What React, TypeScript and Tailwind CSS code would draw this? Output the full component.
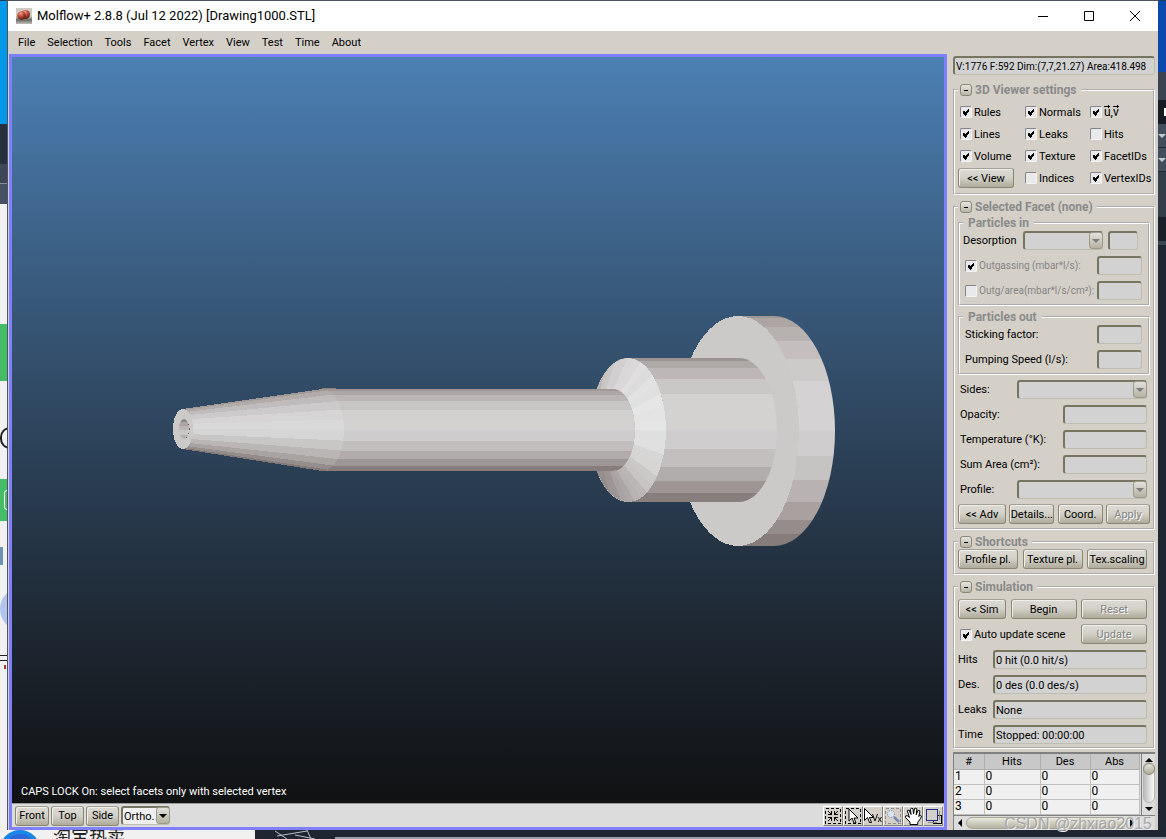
import React from "react";

/* ---------- geometry helpers for the 3D part ---------- */

type Ell = { cx: number; cy: number; rx: number; ry: number };

const FLANGE_FRONT: Ell = { cx: 738, cy: 431, rx: 61, ry: 115 };
const FLANGE_BACK: Ell = { cx: 774, cy: 431, rx: 61, ry: 115 };
const HUB_FRONT: Ell = { cx: 628, cy: 430, rx: 38, ry: 72 };
const HUB_BACK: Ell = { cx: 739, cy: 430, rx: 38, ry: 72 };
const SHAFT_END: Ell = { cx: 613, cy: 430, rx: 22, ry: 41 };
const TAPER_END: Ell = { cx: 322, cy: 430, rx: 22, ry: 41 };
const TIP: Ell = { cx: 183, cy: 429, rx: 10, ry: 20 };

function at(e: Ell, deg: number): [number, number] {
  const a = (deg * Math.PI) / 180;
  return [e.cx + e.rx * Math.cos(a), e.cy + e.ry * Math.sin(a)];
}

function poly(points: [number, number][]) {
  return points.map(([x, y]) => `${x.toFixed(1)},${y.toFixed(1)}`).join(" ");
}

function sweep(a: Ell, b: Ell) {
  return `M${a.cx} ${a.cy - a.ry}H${b.cx}A${b.rx} ${b.ry} 0 0 1 ${b.cx} ${b.cy + b.ry}H${a.cx}A${a.rx} ${a.ry} 0 0 1 ${a.cx} ${a.cy - a.ry}Z`;
}

type Band = [number, string];

function Bands({ x, w, end, bands, clip }: { x: number; w: number; end: number; bands: Band[]; clip: string }) {
  return (
    <g clipPath={`url(#${clip})`}>
      {bands.map(([y, c], i) => {
        const next = i + 1 < bands.length ? bands[i + 1][0] : end;
        return <rect key={y} x={x} y={y} width={w} height={next - y} fill={c} />;
      })}
    </g>
  );
}

const FLANGE_BANDS: Band[] = [
  [315, "#a09897"], [318, "#aca5a4"], [327, "#b7b1b0"], [341, "#c4bfbe"], [359, "#cccbc9"], [381, "#d4d2d3"],
  [430, "#cfcdce"], [456, "#c5c4c2"], [480, "#b8b3b2"], [502, "#a8a1a0"], [520, "#958d8c"], [534, "#867c7b"],
];
const HUB_BANDS: Band[] = [
  [357, "#9c9493"], [361, "#aea8a7"], [368, "#bdb8b7"], [379, "#c9c8c6"], [394, "#d3d2d1"], [430, "#cfcdce"],
  [449, "#c3bfbe"], [467, "#b1adac"], [481, "#9d9695"], [493, "#877e7d"],
];
const SHAFT_BANDS: Band[] = [
  [388, "#a09897"], [391, "#ada7a6"], [395, "#bbb6b5"], [401, "#c8c6c4"], [410, "#d1d0cf"], [419, "#d3d2d1"], [430, "#cecccd"],
  [441, "#c2bebd"], [451, "#b1acab"], [459, "#9d9695"], [466, "#877d7c"],
];
const TAPER_COLORS = [
  "#a19a99", "#b1abaa", "#c0bcbb", "#cccaca", "#d6d4d5", "#dad9da",
  "#d6d5d5", "#c9c7c6", "#bab6b5", "#a8a2a1", "#958d8c", "#827877",
];
const HOLE_BANDS: Band[] = [
  [418, "#8e8584"], [422, "#a9a3a2"], [426, "#bab6b5"], [430, "#c9c7c5"], [435, "#b5b0af"],
];

const CHAMFER_COLORS: Band[] = [
  [-180, "#b5b0af"], [-160, "#a9a2a1"], [-135, "#bdb8b7"], [-110, "#cecccb"], [-90, "#d5d3d4"], [-75, "#dcdadb"],
  [-45, "#e1e0e1"], [-15, "#e6e6e6"], [15, "#dedede"], [38, "#d2d1d0"], [60, "#c1bdbc"], [85, "#aea9a8"],
  [110, "#9b9493"], [135, "#948c8b"], [181, "#b5b0af"],
];

function chamferColor(deg: number, odd: boolean) {
  let i = 0;
  while (i < CHAMFER_COLORS.length - 2 && CHAMFER_COLORS[i + 1][0] <= deg) i++;
  const [a0, c0] = CHAMFER_COLORS[i];
  const [a1, c1] = CHAMFER_COLORS[i + 1];
  const t = (deg - a0) / (a1 - a0);
  const ch = [1, 3, 5].map((k) => {
    const p = parseInt(c0.slice(k, k + 2), 16);
    const q = parseInt(c1.slice(k, k + 2), 16);
    return Math.round(p + (q - p) * t + (odd ? 2 : -2));
  });
  return `rgb(${ch.join(",")})`;
}

function Model() {
  const steps = Array.from({ length: 36 }, (_, i) => -180 + i * 10);
  return (
    <svg viewBox="12 57 932 746" className="absolute inset-0 h-full w-full" shapeRendering="crispEdges" role="img" aria-label="Drawing1000.STL">
      <defs>
        <clipPath id="flange"><path d={sweep(FLANGE_FRONT, FLANGE_BACK)} /></clipPath>
        <clipPath id="hub"><path d={sweep(HUB_FRONT, HUB_BACK)} /></clipPath>
        <clipPath id="shaft">
          <path d={`M${TAPER_END.cx} 389H${SHAFT_END.cx}A22 41 0 0 1 ${SHAFT_END.cx} 471H${TAPER_END.cx}Z`} />
        </clipPath>
        <clipPath id="hole"><ellipse cx="184" cy="429" rx="5" ry="10" /></clipPath>
      </defs>
      <Bands x={738} w={100} end={547} bands={FLANGE_BANDS} clip="flange" />
      <ellipse {...FLANGE_FRONT} fill="#cbcac8" />
      <Bands x={590} w={190} end={504} bands={HUB_BANDS} clip="hub" />
      <ellipse {...HUB_FRONT} fill="#bcb8b7" />
      {steps.map((d, i) => (
        <polygon
          key={d}
          points={poly([at(HUB_FRONT, d), at(HUB_FRONT, d + 10.5), at(SHAFT_END, d + 10.5), at(SHAFT_END, d)])}
          fill={chamferColor(d + 5, i % 2 === 1)}
        />
      ))}
      <Bands x={320} w={318} end={472} bands={SHAFT_BANDS} clip="shaft" />
      <rect x="322" y="388" width="14" height="1" fill="#8a8180" />
      {TAPER_COLORS.map((c, i) => {
        const a = -90 + i * 15;
        return (
          <polygon
            key={a}
            points={poly([at(TIP, a), at(TAPER_END, a), at(TAPER_END, a + 7.5), at(TAPER_END, a + 15), at(TIP, a + 15), [TIP.cx, TIP.cy]])}
            fill={c}
          />
        );
      })}
      <ellipse {...TIP} fill="#cbcac8" />
      <Bands x={178} w={12} end={440} bands={HOLE_BANDS} clip="hole" />
      <path d="M188 424h1v1h-1zM189 428h1v2h-1zM188 433h1v1h-1zM186 437h1v1h-1z" fill="#6d6362" />
    </svg>
  );
}

/* ---------- widgets ---------- */

const SUNKEN =
  "h-[19px] min-w-0 rounded-[3px] border border-t-2 border-l-2 border-t-[#77755f] border-l-[#77755f] border-r-[#bdbdb0] border-b-[#bdbdb0] bg-[#d2d2d2] px-px leading-[15px] text-black outline-none";
const RAISED =
  "h-[20px] rounded-[3px] border border-[#8a8873] border-t-[#a3a193] bg-linear-to-b from-[#dcdad5] via-[#d2d0c6] to-[#aeab9b] text-[11px] leading-[17px] whitespace-nowrap text-black shadow-[inset_1px_1px_0_#efeeea]";

function Btn({ children, className = "", disabled = false }: { children: React.ReactNode; className?: string; disabled?: boolean }) {
  return (
    <button type="button" disabled={disabled} className={`${RAISED} disabled:text-[#848484] disabled:[text-shadow:1px_1px_0_#fff] ${className}`}>
      {children}
    </button>
  );
}

function Check({ label, checked = false, disabled = false, aria }: { label: React.ReactNode; checked?: boolean; disabled?: boolean; aria?: string }) {
  return (
    <label className={`flex h-full items-center gap-[2px] whitespace-nowrap ${disabled ? "text-[10px] text-[#848484]" : ""}`}>
      <span className="grid h-3 w-3 shrink-0 place-items-center">
        <input
          type="checkbox"
          defaultChecked={checked}
          disabled={disabled}
          aria-label={aria}
          className="peer col-start-1 row-start-1 h-3 w-3 appearance-none rounded-[2px] border border-[#f4f4f4] border-t-[#84848c] border-l-[#84848c] bg-[#e9e9ec]"
        />
        <svg viewBox="0 0 12 12" className="pointer-events-none invisible col-start-1 row-start-1 h-3 w-3 peer-checked:visible" shapeRendering="crispEdges">
          <path d="M3 5v2l2 3h1l3-5V3H8L6 6H5L4 5z" fill="#000" />
        </svg>
      </span>
      {label}
    </label>
  );
}

function Drop({ label, className, children, light = false }: { label: string; className: string; children?: React.ReactNode; light?: boolean }) {
  return (
    <span className={`relative flex ${className}`}>
      <select aria-label={label} className={`${SUNKEN} w-full appearance-none text-[11px] ${light ? "bg-[#f0f0f0]" : ""}`}>
        {children}
      </select>
      <span className="pointer-events-none absolute top-px right-0 grid h-[17px] w-[14px] place-items-center rounded-[3px] border border-[#9b9987] bg-linear-to-b from-[#e2e1dc] to-[#b5b2a2]">
        <svg viewBox="0 0 8 4" className="h-1 w-2"><path d="M0 0h8L4 4z" fill={light ? "#000" : "#7d7d7d"} /></svg>
      </span>
    </span>
  );
}

function Group({ title, children, collapsible = false, className = "" }: { title: string; children: React.ReactNode; collapsible?: boolean; className?: string }) {
  return (
    <fieldset className={`min-w-0 border-2 border-white [border-style:groove] ${className}`}>
      <legend className={`flex h-[14px] items-center gap-[3px] text-[12px] leading-[14px] font-bold whitespace-nowrap text-[#8a8a8a] ${collapsible ? "pr-1 pl-[2px]" : "px-[5px]"}`}>
        {collapsible && (
          <button type="button" aria-label={`Collapse ${title}`} className="grid h-3 w-3 place-items-center rounded-[3px] border border-[#8a8873] bg-linear-to-b from-[#e6e5e0] to-[#b8b5a6]">
            <span className="h-px w-1 bg-black" />
          </button>
        )}
        {title}
      </legend>
      {children}
    </fieldset>
  );
}

function Field({ label, id, width, value }: { label: React.ReactNode; id: string; width: string; value?: string }) {
  return (
    <div className="flex h-[21px] items-center justify-between">
      <label htmlFor={id} className="whitespace-nowrap">{label}</label>
      <input id={id} readOnly defaultValue={value} className={`${SUNKEN} text-[11px] ${width}`} />
    </div>
  );
}

const VIEW_CHECKS: { label: string; checked: boolean }[][] = [
  [{ label: "Rules", checked: true }, { label: "Normals", checked: true }, { label: "uv", checked: true }],
  [{ label: "Lines", checked: true }, { label: "Leaks", checked: true }, { label: "Hits", checked: false }],
  [{ label: "Volume", checked: true }, { label: "Texture", checked: true }, { label: "FacetIDs", checked: true }],
  [{ label: "", checked: false }, { label: "Indices", checked: false }, { label: "VertexIDs", checked: true }],
];

function Vectors() {
  return (
    <span className="relative text-[12px]">
      u,v
      <svg viewBox="0 0 18 5" className="absolute -top-[2px] left-0 h-[5px] w-[18px]" fill="#000" shapeRendering="crispEdges">
        <path d="M0 2h4V1h1v1h1v1H5v1H4V3H0zM9 2h4V1h1v1h1v1h-1v1h-1V3H9z" />
      </svg>
    </span>
  );
}

function Sidebar() {
  return (
    <aside className="flex w-[202px] shrink-0 flex-col pt-[2px] text-[11px] leading-[13px]">
      <input readOnly aria-label="Geometry summary" defaultValue="V:1776 F:592 Dim:(7,7,21.27) Area:418.498" className={`${SUNKEN} w-full shrink-0 text-[10px]`} />

      <Group title="3D Viewer settings" collapsible className="mt-2 px-[3px] pb-1">
        <div className="-mr-[3px] grid grid-cols-3 pt-1">
          {VIEW_CHECKS.flat().map((c, i) => (
            <div key={i} className="flex h-[22px] items-center pl-[2px]">
              {c.label === "" ? (
                <Btn className="-ml-[2px] w-[56px]">&lt;&lt; View</Btn>
              ) : (
                <Check label={c.label === "uv" ? <Vectors /> : c.label} checked={c.checked} aria={c.label === "uv" ? "u, v vectors" : undefined} />
              )}
            </div>
          ))}
        </div>
      </Group>

      <Group title="Selected Facet (none)" collapsible className="mt-[5px] px-[3px] pb-[3px]">
        <Group title="Particles in" className="mt-[2px] pr-[6px] pb-[3px] pl-[3px]">
          <div className="flex flex-col gap-1">
            <div className="flex h-[21px] items-center">
              <span className="w-[60px]">Desorption</span>
              <Drop label="Desorption" className="w-[80px]" />
              <input aria-label="Desorption exponent" readOnly className={`${SUNKEN} ml-[5px] w-[30px]`} />
            </div>
            <div className="flex h-[21px] items-center justify-between pl-[2px]">
              <Check label="Outgassing (mbar*l/s):" checked disabled />
              <input aria-label="Outgassing" readOnly className={`${SUNKEN} w-[45px] shrink-0`} />
            </div>
            <div className="flex h-[21px] items-center justify-between pl-[2px]">
              <Check label="Outg/area(mbar*l/s/cm²):" disabled />
              <input aria-label="Outgassing per area" readOnly className={`${SUNKEN} w-[45px] shrink-0`} />
            </div>
          </div>
        </Group>
        <Group title="Particles out" className="mt-1 pr-[6px] pb-[3px] pl-[3px]">
          <div className="flex flex-col gap-1 pl-[2px]">
            <Field id="sticking" label="Sticking factor:" width="w-[45px]" />
            <Field id="pumping" label="Pumping Speed (l/s):" width="w-[45px]" />
          </div>
        </Group>
        <div className="flex flex-col gap-1 pt-1 pr-[3px] pl-[2px]">
          <div className="flex h-[21px] items-center justify-between">
            <span>Sides:</span>
            <Drop label="Sides" className="w-[130px]" />
          </div>
          <Field id="opacity" label="Opacity:" width="w-[84px]" />
          <Field id="temperature" label="Temperature (°K):" width="w-[84px]" />
          <Field id="area" label="Sum Area (cm²):" width="w-[84px]" />
          <div className="flex h-[21px] items-center justify-between">
            <span>Profile:</span>
            <Drop label="Profile" className="w-[130px]" />
          </div>
        </div>
        <div className="flex h-[25px] justify-between pt-1">
          <Btn className="w-[48px]">&lt;&lt; Adv</Btn>
          <Btn className="w-[45px]">Details...</Btn>
          <Btn className="w-[45px]">Coord.</Btn>
          <Btn className="w-[44px]" disabled>Apply</Btn>
        </div>
      </Group>

      <Group title="Shortcuts" collapsible className="mt-[5px] px-[3px] pb-[3px]">
        <div className="flex h-[21px] justify-between pr-[3px]">
          <Btn className="w-[60px]">Profile pl.</Btn>
          <Btn className="w-[60px]">Texture pl.</Btn>
          <Btn className="w-[60px]">Tex.scaling</Btn>
        </div>
      </Group>

      <Group title="Simulation" collapsible className="mt-[5px] px-[3px] pb-[2px]">
        <div className="flex flex-col gap-1 pt-[5px] pr-[3px]">
          <div className="flex h-[21px] justify-between">
            <Btn className="w-[48px]">&lt;&lt; Sim</Btn>
            <Btn className="w-[66px]">Begin</Btn>
            <Btn className="w-[66px]" disabled>Reset</Btn>
          </div>
          <div className="flex h-[21px] justify-between pl-[2px]">
            <Check label="Auto update scene" checked />
            <Btn className="w-[66px]" disabled>Update</Btn>
          </div>
          <Field id="hits" label="Hits" value="0 hit (0.0 hit/s)" width="w-[154px]" />
          <Field id="des" label="Des." value="0 des (0.0 des/s)" width="w-[154px]" />
          <Field id="leaks" label="Leaks" value="None" width="w-[154px]" />
          <Field id="time" label="Time" value="Stopped: 00:00:00" width="w-[154px]" />
        </div>
      </Group>

      <HitTable />
    </aside>
  );
}

const HEADS = [
  { t: "#", w: "w-[30px]" },
  { t: "Hits", w: "w-[56px]" },
  { t: "Des", w: "w-[50px]" },
  { t: "Abs", w: "w-[49px]" },
];

function HitTable() {
  return (
    <div className="mt-[3px] flex flex-1 flex-col border-t-2 border-l border-[#808080] bg-[#dcdcdc]">
      <div className="flex h-[61px] overflow-hidden">
        <table className="h-full border-collapse text-[12px] leading-[13px]">
          <thead className="bg-[#c8c8c8]">
            <tr>
              {HEADS.map((h) => (
                <th key={h.t} className={`h-[15px] border border-t-0 border-l-0 border-[#aeaeae] p-0 text-[11px] font-normal ${h.w}`}>{h.t}</th>
              ))}
            </tr>
          </thead>
          <tbody className="bg-[#f0f0f0]">
            {[1, 2, 3].map((n) => (
              <tr key={n}>
                {[n, 0, 0, 0].map((v, i) => (
                  <td key={i} className="h-[15px] border border-l-0 border-[#c0c0c0] p-0 pl-px">{v}</td>
                ))}
              </tr>
            ))}
          </tbody>
        </table>
        <div className="ml-auto flex w-[14px] flex-col items-center justify-between border-l border-[#808080] py-1">
          <svg viewBox="0 0 8 4" className="h-1 w-2"><path d="M0 4h8L4 0z" /></svg>
          <span className="flex w-3 flex-1 flex-col rounded-full border border-[#b5b5b5] bg-linear-to-r from-[#bcbcbc] to-[#fafafa]">
            <span className="-ml-px h-3 w-3 rounded-full border border-[#8d8b78] bg-linear-to-b from-[#e6e5dc] to-[#aeab99]" />
          </span>
          <svg viewBox="0 0 8 4" className="mt-1 h-1 w-2"><path d="M0 0h8L4 4z" /></svg>
        </div>
      </div>
      <div className="flex flex-1 items-center gap-1 border-t border-[#808080] px-1">
        <svg viewBox="0 0 4 8" className="h-2 w-1"><path d="M4 0v8L0 4z" /></svg>
        <span className="h-3 w-[160px] rounded-full border border-[#a8a697] bg-linear-to-b from-[#eae9df] to-[#b5b2a0]" />
        <svg viewBox="0 0 4 8" className="h-2 w-1"><path d="M0 0v8l4-4z" /></svg>
      </div>
    </div>
  );
}

/* ---------- viewer tool icons ---------- */

const ARROW = "M0 0v12l3-3 2 5h2l-2-5h4z";

function ToolIcon({ kind }: { kind: string }) {
  return (
    <svg viewBox="0 0 18 18" className="h-[18px] w-[18px]" fill="none" stroke="#000">
      {kind === "fit" && (
        <g shapeRendering="crispEdges">
          <rect x="1.5" y="1.5" width="15" height="15" strokeDasharray="3 2" />
          <path d="M4 4h1v1h1v1h1V4h1v4H4V7h2V6H5V5H4zM14 4h-1v1h-1v1h-1V4h-1v4h4V7h-2V6h1V5h1zM4 14h1v-1h1v-1h1v2h1v-4H4v1h2v1H5v1H4zM14 14h-1v-1h-1v-1h-1v2h-1v-4h4v1h-2v1h1v1h1z" fill="#000" stroke="none" />
        </g>
      )}
      {kind === "select" && (
        <>
          <rect x="1.5" y="1.5" width="15" height="15" strokeDasharray="3 2" shapeRendering="crispEdges" />
          <path d={ARROW} transform="translate(5 2)" fill="#fff" />
        </>
      )}
      {kind === "vertex" && (
        <>
          <path d={ARROW} transform="translate(.5 1.5)" fill="#fff" />
          <path d="M8.5 7l2.5 7L13.500 7M14 10l3.500 5M17.500 10L14 15" strokeWidth=".9" />
        </>
      )}
      {kind === "zoom" && (
        <>
          <rect x="1.5" y="1.5" width="15" height="15" strokeDasharray="3 2" stroke="#8c8c8c" shapeRendering="crispEdges" />
          <circle cx="7" cy="7" r="3.5" fill="#d8e4f0" stroke="#7f879c" strokeDasharray="1 1" />
          <path d="M10 10l5 5" stroke="#7c84b4" strokeWidth="2.5" />
        </>
      )}
      {kind === "hand" && (
        <path
          d="M6 17.500v-2.500L1.500 10.500V9.200l1.500-.7L5.500 10.500 3.500 4.500V3.500l1.500-.5L7 7.500 6.500 2.500l1-1.500 1.500.8L9.500 7l1-5.500 1.500-.5.8 1.200L12.200 7.800 14 3.500l1.500.2.4 1.300L14.700 9.500l1.500-1.300 1.300.8-.8 2.200-3 4.300v2z"
          fill="#fff"
        />
      )}
      {kind === "layers" && (
        <g shapeRendering="crispEdges">
          <path d="M14 8.500h3.500v8h-8V14" />
          <path d="M4 15.500h9M15.500 4v9" stroke="#8a8a8a" />
          <rect x="2.5" y="2.5" width="11" height="11" fill="#d4d0c8" stroke="#1c2b8c" strokeWidth="1.5" />
        </g>
      )}
    </svg>
  );
}

const TOOLS = ["fit", "select", "vertex", "zoom", "hand", "layers"];

function Viewer() {
  return (
    <main className="flex min-w-0 flex-1 flex-col border-[3px] border-[#8080ff]">
      <div className="relative min-h-0 flex-1 overflow-hidden bg-linear-to-b from-[#4c80b4] to-[#101112]">
        <Model />
        <p className="absolute bottom-[5px] left-[9px] text-[11px] leading-[13px] text-white">CAPS LOCK On: select facets only with selected vertex</p>
      </div>
      <div className="flex h-6 shrink-0 items-center gap-[2px] border-t border-[#9a9a9a] bg-[#dcdcdc] pr-px pl-[3px]">
        <Btn className="w-[34px]">Front</Btn>
        <Btn className="w-[33px]">Top</Btn>
        <Btn className="w-[33px]">Side</Btn>
        <Drop label="Projection" className="w-[49px]" light>
          <option>Ortho.</option>
        </Drop>
        <div className="ml-auto flex">
          {TOOLS.map((t) => (
            <button key={t} type="button" aria-label={t} className="grid h-5 w-5 place-items-center border border-white border-r-[#808080] border-b-[#808080] bg-[#d4d0c8]">
              <ToolIcon kind={t} />
            </button>
          ))}
        </div>
      </div>
    </main>
  );
}

const MENU = ["File", "Selection", "Tools", "Facet", "Vertex", "View", "Test", "Time", "About"];

function AppWindow() {
  return (
    <div className="flex min-w-0 flex-1 flex-col bg-[#d4d0c8] shadow-[0_0_0_1px_#4b5560]">
      <header className="flex h-[30px] shrink-0 items-center bg-white pl-2 text-[13px]">
        <svg viewBox="0 0 16 16" className="mr-[5px] h-4 w-4">
          <defs>
            <radialGradient id="ball" cx=".4" cy=".25" r=".8"><stop offset="0" stopColor="#f0a090" /><stop offset=".5" stopColor="#b8452f" /><stop offset="1" stopColor="#4a1a14" /></radialGradient>
            <linearGradient id="tile" x1="0" y1="0" x2="0" y2="1"><stop offset=".5" stopColor="#cfcbc4" /><stop offset=".75" stopColor="#6e6a66" /><stop offset="1" stopColor="#c4c0ba" /></linearGradient>
          </defs>
          <rect width="16" height="16" fill="url(#tile)" />
          <circle cx="9.5" cy="6.5" r="4.5" fill="url(#ball)" />
          <circle cx="5.5" cy="7.5" r="4.2" fill="url(#ball)" />
        </svg>
        <h1 className="flex-1 truncate">Molflow+ 2.8.8 (Jul 12 2022) [Drawing1000.STL]</h1>
        <button type="button" aria-label="Minimize" className="grid h-full w-[46px] place-items-center">
          <svg viewBox="0 0 10 10" className="h-[10px] w-[10px]" stroke="#000"><path d="M0 5.5h10" /></svg>
        </button>
        <button type="button" aria-label="Maximize" className="grid h-full w-[46px] place-items-center">
          <svg viewBox="0 0 10 10" className="h-[10px] w-[10px]" stroke="#000" fill="none"><path d="M.5.5h9v9h-9z" /></svg>
        </button>
        <button type="button" aria-label="Close" className="grid h-full w-[46px] place-items-center">
          <svg viewBox="0 0 10 10" className="h-[10px] w-[10px]" stroke="#000"><path d="M0 0l10 10M10 0L0 10" /></svg>
        </button>
      </header>
      <nav className="flex h-[23px] shrink-0 items-center gap-3 pt-[2px] pl-[10px] text-[11px]">
        {MENU.map((m) => (
          <button key={m} type="button">{m}</button>
        ))}
      </nav>
      <div className="flex flex-1 gap-[6px] pr-[3px] pl-px">
        <Viewer />
        <Sidebar />
      </div>
    </div>
  );
}

/* ---------- desktop behind the window ---------- */

function LeftEdge() {
  return (
    <div aria-hidden="true" className="flex w-2 shrink-0 flex-col overflow-hidden bg-[#f1f1f1]">
      <div className="h-[123px] bg-[#0298ea]" />
      <div className="h-10 bg-[#28303c]" />
      <div className="h-5 border-b border-[#8a8f96] bg-[#3d4756]" />
      <div className="h-5 bg-[#465263]" />
      <div className="h-[120px]" />
      <div className="h-[57px] bg-[#45bd66]" />
      <div className="h-[98px] pt-[46px]">
        <div className="h-[22px] w-5 rounded-full border-2 border-[#222]" />
      </div>
      <div className="flex h-[42px] items-center bg-[#45bd66] pl-1">
        <div className="h-5 w-5 shrink-0 rounded-[3px] border border-white" />
      </div>
      <div className="h-[26px]" />
      <div className="h-[18px] w-[3px] bg-[#6d93ae]" />
      <div className="h-[22px]" />
      <div className="h-11 w-11 rounded-full bg-[#b0c4ec]" />
      <div className="pt-[24px]">
        <div className="h-px bg-[#222]" />
        <div className="mt-1 h-px bg-[#222]" />
        <div className="mt-1 ml-1 h-1 w-[2px] bg-[#a33]" />
      </div>
    </div>
  );
}

function BottomEdge() {
  return (
    <div aria-hidden="true" className="flex h-[9px] shrink-0 overflow-hidden bg-[#1f2631]">
      <div className="flex w-[255px] overflow-hidden bg-[#f1f1f1]">
        <div className="h-10 w-10 shrink-0 rounded-full border-4 border-[#1a86e8] bg-[#2b6ad8]" />
        <div className="-mt-[5px] ml-[13px] font-['Noto_Sans_CJK_SC',sans-serif] text-[18px] leading-[20px] text-[#222]">淘宝热卖</div>
      </div>
      <svg viewBox="0 0 80 9" className="h-[9px] w-20" stroke="#b9c0c8" fill="none"><path d="M20 1l12 8M22 6l30-5M52 0l4 9M40 5l20 4" /></svg>
      <div className="flex-1 border-b-2 border-[#9aa0aa]" />
    </div>
  );
}

function RightEdge() {
  return (
    <div aria-hidden="true" className="flex w-2 shrink-0 flex-col bg-[#1f2732]">
      <div className="h-[71px] bg-[#0a49ae]" />
      <div className="h-7 bg-[#3b4452]" />
      <div className="flex h-6 items-center justify-end bg-[#171c24]"><span className="h-2 w-[2px] bg-white" /></div>
      <div className="flex h-6 items-center border-b border-[#222a35] bg-[#414c5c]"><svg viewBox="0 0 8 4" className="h-1 w-2"><path d="M0 0h8L4 4z" fill="#c3c8cf" /></svg></div>
      <div className="flex h-6 items-center border-b border-[#222a35] bg-[#414c5c]"><svg viewBox="0 0 8 4" className="h-1 w-2"><path d="M0 0h8L4 4z" fill="#c3c8cf" /></svg></div>
      <div className="h-[45px] bg-[#343e4b]" />
      <div className="h-7 border-b-4 border-[#3c4755] bg-[#1a2029]" />
    </div>
  );
}

export default function App() {
  return (
    <div className="relative flex min-h-screen flex-col overflow-hidden bg-[#1d3f5f] pt-px font-[Roboto,'Liberation_Sans',sans-serif] text-black">
      <div className="flex flex-1">
        <LeftEdge />
        <AppWindow />
        <RightEdge />
      </div>
      <BottomEdge />
      <p className="pointer-events-none absolute right-[14px] bottom-[6px] font-['Liberation_Sans',sans-serif] text-[16px] leading-[18px] text-[#a0a0a0]/90 [text-shadow:1px_1px_0_#eeeeee]">CSDN @zhxiao2015</p>
    </div>
  );
}
